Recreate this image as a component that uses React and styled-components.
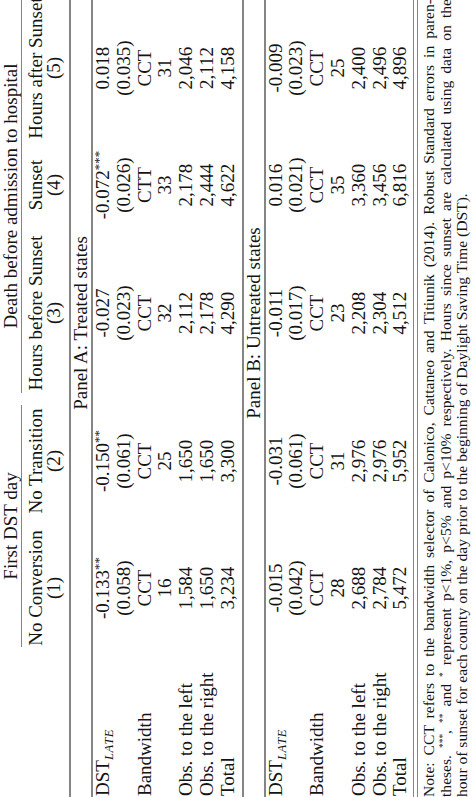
import styled, { createGlobalStyle } from 'styled-components';

const GlobalStyle = createGlobalStyle`
  html, body {
    margin: 0;
    padding: 0;
    background: #ffffff;
  }
`;

const Page = styled.div`
  position: relative;
  width: 474px;
  height: 797px;
  overflow: hidden;
  background: #ffffff;
`;

// the whole table is typeset landscape and turned a quarter turn
const Sheet = styled.div`
  position: absolute;
  top: 0;
  left: 0;
  width: 804px;
  height: 474px;
  transform-origin: 0 0;
  transform: translateY(797px) rotate(-90deg);
  font-family: "Liberation Serif", "Times New Roman", serif;
  color: #141414;
`;

const Table = styled.table`
  width: 804px;
  table-layout: fixed;
  border-collapse: separate;
  border-spacing: 0;
  font-size: 19px;
`;

const Row = styled.tr`
  height: ${({ $h }) => $h || 20.8}px;
`;

const Cell = styled.td`
  padding: 0;
  padding-top: ${({ $pt }) => $pt || 0}px;
  text-align: ${({ $align }) => $align || 'center'};
  line-height: ${({ $lh }) => $lh ?? 20.8}px;
  white-space: nowrap;
  vertical-align: top;
`;

const Label = styled(Cell)`
  text-align: left;
  padding-left: 1px;
`;

const GroupTitle = styled.div`
  margin: 0 6px;
  line-height: 21px;
  border-bottom: 1.5px solid #858585;
`;

const Rule = styled.div`
  height: ${({ $double }) => ($double ? 5 : 2)}px;
  box-sizing: border-box;
  border-top: 1.5px solid #858585;
  border-bottom: ${({ $double }) => ($double ? '1.5px solid #858585' : 'none')};
  background: ${({ $double }) => ($double ? 'transparent' : '#858585')};
`;

const Sup = styled.sup`
  font-size: 0.68em;
  line-height: 0;
  vertical-align: 0.5em;
`;

const Sub = styled.sub`
  font-size: 0.66em;
  font-style: italic;
  letter-spacing: 0.6px;
  line-height: 0;
  vertical-align: -0.3em;
`;

const Notes = styled.div`
  width: 798px;
  margin-top: 3px;
  font-size: 15.6px;
  line-height: 16.5px;
`;

const NoteLine = styled.div`
  white-space: nowrap;
  text-align: ${({ $full }) => ($full ? 'justify' : 'left')};
  text-align-last: ${({ $full }) => ($full ? 'justify' : 'left')};
`;

const NoteStar = styled.sup`
  font-size: 0.6em;
  line-height: 0;
  vertical-align: 0.55em;
`;

const COLS = [144, 130, 124, 172, 84, 150];

const HEADS = ['No Conversion', 'No Transition', 'Hours before Sunset', 'Sunset', 'Hours after Sunset'];

const PANELS = [
  {
    title: 'Panel A: Treated states',
    est: [['-0.133', '**'], ['-0.150', '**'], ['-0.027', ''], ['-0.072', '***'], ['0.018', '']],
    se: ['(0.058)', '(0.061)', '(0.023)', '(0.026)', '(0.035)'],
    bw: ['CCT', 'CCT', 'CCT', 'CTT', 'CCT'],
    h: ['16', '25', '32', '33', '31'],
    left: ['1,584', '1,650', '2,112', '2,178', '2,046'],
    right: ['1,650', '1,650', '2,178', '2,444', '2,112'],
    total: ['3,234', '3,300', '4,290', '4,622', '4,158'],
  },
  {
    title: 'Panel B: Untreated states',
    est: [['-0.015', ''], ['-0.031', ''], ['-0.011', ''], ['0.016', ''], ['-0.009', '']],
    se: ['(0.042)', '(0.061)', '(0.017)', '(0.021)', '(0.023)'],
    bw: ['CCT', 'CCT', 'CCT', 'CCT', 'CCT'],
    h: ['28', '31', '23', '35', '25'],
    left: ['2,688', '2,976', '2,208', '3,360', '2,400'],
    right: ['2,784', '2,976', '2,304', '3,456', '2,496'],
    total: ['5,472', '5,952', '4,512', '6,816', '4,896'],
  },
];

const RuleRow = ({ double, gap = 0 }) => (
  <tr>
    <Cell colSpan={6} $lh={0} $pt={gap}>
      <Rule $double={double} />
    </Cell>
  </tr>
);

const DataRow = ({ label, values }) => (
  <Row>
    <Label>{label}</Label>
    {values.map((v, i) => (
      <Cell key={i}>{v}</Cell>
    ))}
  </Row>
);

const Panel = ({ p, last }) => (
  <>
    <Row $h={20}>
      <Cell />
      <Cell colSpan={5} $lh={20}>{p.title}</Cell>
    </Row>
    <RuleRow />
    <Row>
      <Label>
        DST<Sub>LATE</Sub>
      </Label>
      {p.est.map(([v, s], i) => (
        <Cell key={i}>
          {v}
          {s && <Sup>{s}</Sup>}
        </Cell>
      ))}
    </Row>
    <DataRow label="" values={p.se} />
    <DataRow label="Bandwidth" values={p.bw} />
    <DataRow label="" values={p.h} />
    <DataRow label="Obs. to the left" values={p.left} />
    <DataRow label="Obs. to the right" values={p.right} />
    <DataRow label="Total" values={p.total} />
    <RuleRow double={last} gap={last ? 2 : 3} />
  </>
);

export default function App() {
  return (
    <Page>
      <GlobalStyle />
      <Sheet>
        <Table>
          <colgroup>
            {COLS.map((w, i) => (
              <col key={i} style={{ width: w }} />
            ))}
          </colgroup>
          <tbody>
            <Row $h={22}>
              <Cell />
              <Cell colSpan={2} $lh={21}>
                <GroupTitle>First DST day</GroupTitle>
              </Cell>
              <Cell colSpan={3} $lh={21}>
                <GroupTitle>Death before admission to hospital</GroupTitle>
              </Cell>
            </Row>
            <Row $h={23}>
              <Cell />
              {HEADS.map((h) => (
                <Cell key={h} $pt={5} $lh={17}>
                  {h}
                </Cell>
              ))}
            </Row>
            <Row $h={24}>
              <Cell />
              {HEADS.map((h, i) => (
                <Cell key={h} $lh={17}>
                  ({i + 1})
                </Cell>
              ))}
            </Row>
            <RuleRow />
            {PANELS.map((p, i) => (
              <Panel key={p.title} p={p} last={i === PANELS.length - 1} />
            ))}
          </tbody>
        </Table>
        <Notes>
          <NoteLine $full>
            Note: CCT refers to the bandwidth selector of Calonico, Cattaneo and Titiunik (2014). Robust Standard errors in paren-
          </NoteLine>
          <NoteLine $full>
            theses. <NoteStar>***</NoteStar>, <NoteStar>**</NoteStar> and <NoteStar>*</NoteStar> represent p&lt;1%, p&lt;5% and
            p&lt;10% respectively. Hours since sunset are calculated using data on the
          </NoteLine>
          <NoteLine>
            hour of sunset for each county on the day prior to the beginning of Daylight Saving Time (DST).
          </NoteLine>
        </Notes>
      </Sheet>
    </Page>
  );
}
